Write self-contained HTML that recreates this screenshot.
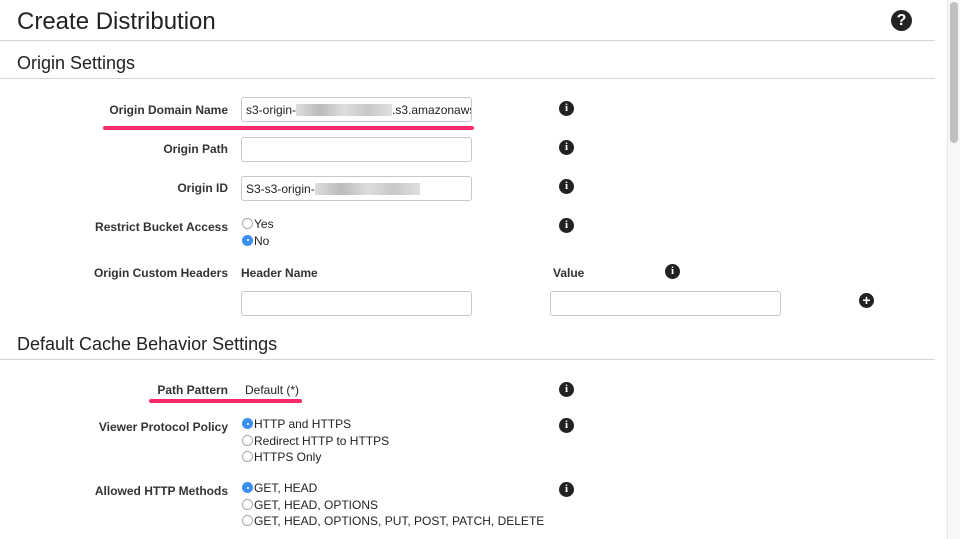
<!DOCTYPE html>
<html><head><style>
body{margin:0;width:960px;height:539px;background:#fff;font-family:"Liberation Sans",sans-serif;color:#222;position:relative;overflow:hidden}
.a{position:absolute}
.t{font-size:24px;left:17px;top:8px;color:#222}
.h{font-size:18px;left:17px;color:#222}
.hr{left:0;width:935px;height:1px;background:#d5d5d5}
.l{font-size:12px;font-weight:bold;color:#333;text-align:right;width:228px;left:0}
.in{left:241px;width:231px;height:25px;border:1px solid #c8c8c8;border-radius:3px;box-sizing:border-box;font-size:12px;padding:5px 4px;white-space:nowrap;overflow:hidden;color:#222}
.i{width:15px;height:15px;border-radius:50%;background:#222;color:#fff;font-size:11px;font-weight:bold;text-align:center;line-height:15px;font-family:"Liberation Serif",serif}
.r{font-size:12px;left:242px;color:#222;line-height:16.7px}
.rb{display:inline-block;width:11px;height:11px;border-radius:50%;border:1px solid #aaa;box-sizing:border-box;vertical-align:-1px;margin-right:1px}
.rs{background:#3b8ff0;border-color:#3b8ff0;position:relative}
.rs:after{content:"";position:absolute;left:3.5px;top:3.5px;width:2px;height:2px;background:#fff;border-radius:50%}
.pk{height:4px;background:#ff2a6a;border-radius:2px}
.blur{display:inline-block;height:12px;background:linear-gradient(90deg,#ddd,#bbb,#ddd,#c8c8c8,#e0e0e0);vertical-align:-2px}
</style></head><body>
<div class="a t">Create Distribution</div>
<div class="a" style="left:891px;top:10px;width:21px;height:21px;border-radius:50%;background:#222;color:#fff;font-weight:bold;font-size:16px;text-align:center;line-height:21px">?</div>
<div class="a hr" style="top:40px"></div>
<div class="a h" style="top:53px">Origin Settings</div>
<div class="a hr" style="top:78px"></div>

<div class="a l" style="top:103px">Origin Domain Name</div>
<div class="a in" style="top:97px">s3-origin-<span class="blur" style="width:96px"></span>.s3.amazonaws.com</div>
<div class="a pk" style="left:103px;top:126px;width:371px"></div>
<div class="a i" style="left:559px;top:101px">i</div>

<div class="a l" style="top:142px">Origin Path</div>
<div class="a in" style="top:137px"></div>
<div class="a i" style="left:559px;top:140px">i</div>

<div class="a l" style="top:181px">Origin ID</div>
<div class="a in" style="top:176px">S3-s3-origin-<span class="blur" style="width:105px"></span></div>
<div class="a i" style="left:559px;top:179px">i</div>

<div class="a l" style="top:220px">Restrict Bucket Access</div>
<div class="a r" style="top:216px"><span class="rb"></span>Yes<br><span class="rb rs"></span>No</div>
<div class="a i" style="left:559px;top:218px">i</div>

<div class="a l" style="top:266px">Origin Custom Headers</div>
<div class="a" style="left:241px;top:266px;font-size:12px;font-weight:bold;color:#333">Header Name</div>
<div class="a" style="left:553px;top:266px;font-size:12px;font-weight:bold;color:#333">Value</div>
<div class="a i" style="left:665px;top:264px">i</div>
<div class="a in" style="top:291px"></div>
<div class="a in" style="top:291px;left:550px;width:231px"></div>
<div class="a" style="left:859px;top:293px;width:15px;height:15px;border-radius:50%;background:#222;color:#fff;font-weight:bold;font-size:14px;text-align:center;line-height:15px">+</div>

<div class="a h" style="top:334px">Default Cache Behavior Settings</div>
<div class="a hr" style="top:359px"></div>

<div class="a l" style="top:383px">Path Pattern</div>
<div class="a" style="left:245px;top:383px;font-size:12px">Default (*)</div>
<div class="a pk" style="left:149px;top:399px;width:153px"></div>
<div class="a i" style="left:559px;top:382px">i</div>

<div class="a l" style="top:420px">Viewer Protocol Policy</div>
<div class="a r" style="top:416px"><span class="rb rs"></span>HTTP and HTTPS<br><span class="rb"></span>Redirect HTTP to HTTPS<br><span class="rb"></span>HTTPS Only</div>
<div class="a i" style="left:559px;top:418px">i</div>

<div class="a l" style="top:484px">Allowed HTTP Methods</div>
<div class="a r" style="top:480px"><span class="rb rs"></span>GET, HEAD<br><span class="rb"></span>GET, HEAD, OPTIONS<br><span class="rb"></span>GET, HEAD, OPTIONS, PUT, POST, PATCH, DELETE</div>
<div class="a i" style="left:559px;top:482px">i</div>

<div class="a" style="left:947px;top:0;width:13px;height:539px;background:#f7f7f7;border-left:1px solid #e5e5e5"></div>
<div class="a" style="left:950px;top:2px;width:8px;height:141px;background:#c1c1c1;border-radius:4px"></div>
</body></html>
